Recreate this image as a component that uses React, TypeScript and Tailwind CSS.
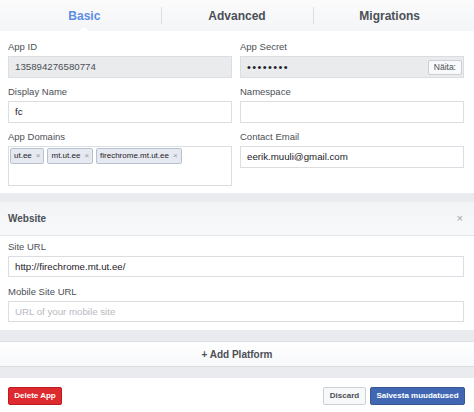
import React from "react";

const label = "h-[16px] leading-[16px] text-[9.5px] text-[#4b4f56] mb-[1px]";
const input =
  "h-[22px] border border-[#dadde1] px-[6px] leading-[20px] text-[9.7px] text-[#1d2129] bg-white";

function Field({ name, children }: { name: string; children: React.ReactNode }) {
  return (
    <div>
      <div className={label}>{name}</div>
      {children}
    </div>
  );
}

function Chip({ text }: { text: string }) {
  return (
    <span className="h-[16px] px-[3px] flex items-center bg-[#e6e9ef] border border-[#b8c1cf] rounded-[2px] text-[8px] text-[#1d2129]">
      {text}
      <span className="ml-[4px] text-[#9197a3] text-[8px]">×</span>
    </span>
  );
}

export default function App() {
  const tabs = ["Basic", "Advanced", "Migrations"];
  return (
    <div className="w-[474px] h-[412px] bg-white font-['Liberation_Sans',Arial,sans-serif] overflow-hidden">
      {/* tabs */}
      <div className="h-[31px] bg-gradient-to-b from-[#fbfbfc] to-[#f4f5f7] px-[8px] flex">
        {tabs.map((t, i) => (
          <div key={t} className="relative flex-1 flex items-center justify-center">
            {i > 0 && <div className="absolute left-0 top-[7px] h-[17px] w-px bg-[#dddfe2]" />}
            <span className={`text-[12px] font-bold ${i === 0 ? "text-[#5b8de6]" : "text-[#4b4f56]"}`}>{t}</span>
            {i === 0 && (
              <div className="absolute bottom-0 left-1/2 -translate-x-1/2 w-0 h-0 border-l-[5px] border-r-[5px] border-b-[4px] border-l-transparent border-r-transparent border-b-white" />
            )}
          </div>
        ))}
      </div>

      {/* basic */}
      <div className="pt-[8px] pb-[7px] pl-[8px] pr-[10px] grid grid-cols-2 gap-x-[8px] gap-y-[6px]">
        <Field name="App ID">
          <div className={`${input} !bg-[#eaebed] !text-[#4b4f56]`}>135894276580774</div>
        </Field>
        <Field name="App Secret">
          <div className={`${input} !bg-[#eaebed] flex items-center justify-between pr-[1px]`}>
            <span className="text-[11px] tracking-[1.4px] text-[#1d2129]">••••••••</span>
            <span className="h-[15px] px-[5px] border border-[#ccd0d5] bg-[#f8f9fa] text-[8.5px] leading-[13px] text-[#4b4f56] rounded-[2px]">
              Näita:
            </span>
          </div>
        </Field>
        <Field name="Display Name">
          <div className={input}>fc</div>
        </Field>
        <Field name="Namespace">
          <div className={input}></div>
        </Field>
        <Field name="App Domains">
          <div className="h-[40px] border border-[#dadde1] bg-white p-[1px] flex items-start gap-[3px]">
            <Chip text="ut.ee" />
            <Chip text="mt.ut.ee" />
            <Chip text="firechrome.mt.ut.ee" />
          </div>
        </Field>
        <Field name="Contact Email">
          <div className={input}>eerik.muuli@gmail.com</div>
        </Field>
      </div>

      <div className="h-[9px] bg-[#e9ebee]" />

      {/* website */}
      <div className="h-[34px] bg-gradient-to-b from-[#f3f4f6] to-[#f8f9fa] border-b border-[#e3e5e8] pl-[8px] pr-[11px] flex items-center justify-between">
        <span className="text-[10px] font-bold text-[#4b4f56]">Website</span>
        <span className="text-[11px] text-[#a0a4ab]">×</span>
      </div>
      <div className="pt-[3px] pb-[8px] pl-[8px] pr-[10px]">
        <div className={label}>Site URL</div>
        <div className={`${input} !h-[21px] !leading-[19px]`}>http://firechrome.mt.ut.ee/</div>
        <div className={`${label} mt-[7px]`}>Mobile Site URL</div>
        <div className={`${input} !h-[21px] !leading-[19px] !text-[#b6bac1]`}>URL of your mobile site</div>
      </div>

      <div className="h-[11px] bg-[#e9ebee]" />
      <div className="h-[26px] border-y border-[#dadde1] bg-gradient-to-b from-white to-[#f7f8fa] flex items-center justify-center text-[10px] font-bold text-[#4b4f56]">
        + Add Platform
      </div>
      <div className="h-[11px] bg-[#e9ebee]" />

      {/* footer */}
      <div className="pt-[9px] pl-[8px] pr-[9px] flex items-start">
        <button className="h-[18px] w-[54px] bg-[#dd2a2f] border border-[#c0181d] rounded-[2px] text-white text-[8px] font-bold">
          Delete App
        </button>
        <div className="ml-auto flex gap-[4px]">
          <button className="h-[18px] w-[43px] bg-[#f7f8fa] border border-[#ccd0d5] rounded-[2px] text-[#4b4f56] text-[8px] font-bold">
            Discard
          </button>
          <button className="h-[18px] w-[95px] bg-[#4267b2] border border-[#365899] rounded-[2px] text-white text-[8px] font-bold">
            Salvesta muudatused
          </button>
        </div>
      </div>
    </div>
  );
}
